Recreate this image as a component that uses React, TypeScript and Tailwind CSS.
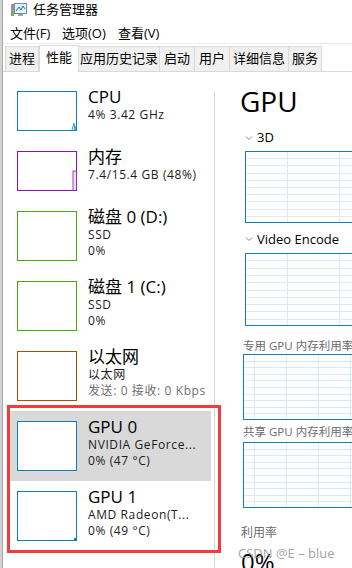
import React from 'react';

const font = "font-['Open_Sans','Noto_Sans_CJK_SC',sans-serif]";

type Item = {
  title: string;
  lines: string[];
  color: string;
  tall: boolean;
  kind?: 'cpu' | 'mem' | 'gpu1';
  selected?: boolean;
  dimLast?: boolean;
};

const items: Item[] = [
  { title: 'CPU', lines: ['4% 3.42 GHz'], color: '#117dbb', tall: false, kind: 'cpu' },
  { title: '内存', lines: ['7.4/15.4 GB (48%)'], color: '#8b12ae', tall: false, kind: 'mem' },
  { title: '磁盘 0 (D:)', lines: ['SSD', '0%'], color: '#4da60c', tall: true },
  { title: '磁盘 1 (C:)', lines: ['SSD', '0%'], color: '#4da60c', tall: true },
  { title: '以太网', lines: ['以太网', '发送: 0 接收: 0 Kbps'], color: '#a74f01', tall: true, dimLast: true },
  { title: 'GPU 0', lines: ['NVIDIA GeForce...', '0% (47 °C)'], color: '#117dbb', tall: true, selected: true },
  { title: 'GPU 1', lines: ['AMD Radeon(T...', '0% (49 °C)'], color: '#117dbb', tall: true, kind: 'gpu1' },
];

function Thumb({ item }: { item: Item }) {
  const h = item.tall ? 50 : 40;
  return (
    <svg width={60} height={h} className="shrink-0">
      <rect x={0.5} y={0.5} width={59} height={h - 1} fill="#fff" stroke={item.color} />
      {item.kind === 'cpu' && (
        <polyline points="55,39 57,32 58,39 59,35" fill="#d3e7f5" stroke={item.color} strokeWidth={0.8} />
      )}
      {item.kind === 'mem' && (
        <rect x={56} y={20} width={3.5} height={19.5} fill="#efe1f5" stroke={item.color} strokeWidth={0.8} />
      )}
      {item.kind === 'gpu1' && <rect x={57} y={47} width={2} height={2} fill={item.color} />}
    </svg>
  );
}

function Graph({ h, start, step }: { h: number; start: number; step: number }) {
  const w = 200;
  const rows = [];
  for (let i = 1; i < 10; i++) rows.push(Math.round((h * i) / 10) + 0.5);
  const cols = [];
  for (let x = start; x < w; x += step) cols.push(x + 0.5);
  return (
    <svg width={w} height={h} className="block shrink-0">
      <rect x={0} y={0} width={w} height={h} fill="#fff" />
      {rows.map((y) => (
        <line key={'r' + y} x1={0} x2={w} y1={y} y2={y} stroke="#d9e9f5" />
      ))}
      {cols.map((x) => (
        <line key={'c' + x} x1={x} x2={x} y1={0} y2={h} stroke="#d9e9f5" />
      ))}
      <rect x={0.5} y={0.5} width={w + 10} height={h - 1} fill="none" stroke="#117dbb" />
    </svg>
  );
}

function Chevron() {
  return (
    <svg width={8} height={6} className="shrink-0">
      <polyline points="1,1.5 4,4.5 7,1.5" fill="none" stroke="#8a8a8a" strokeWidth={1} />
    </svg>
  );
}

const tabs = [
  { label: '进程', w: 'w-[34px]' },
  { label: '性能', w: 'w-[40px]' },
  { label: '应用历史记录', w: 'w-[82px]' },
  { label: '启动', w: 'w-[36px]' },
  { label: '用户', w: 'w-[36px]' },
  { label: '详细信息', w: 'w-[60px]' },
  { label: '服务', w: 'w-[34px]' },
];

export default function App() {
  return (
    <div className={`relative w-[352px] h-[568px] overflow-hidden bg-white flex ${font} text-black`}>
      {/* background window peeking on the left */}
      <div className="w-[2px] bg-[#d2d2d2] shrink-0" />
      <div className="w-[1px] bg-[#a8a8a8] shrink-0" />

      <div className="flex-1 flex flex-col min-w-0">
        {/* title bar */}
        <div className="h-[19px] flex items-center pl-[8px] gap-[6px]">
          <svg width={16} height={13} className="shrink-0">
            <rect x={0} y={1} width={3} height={12} fill="#8c9aa6" />
            <rect x={0} y={9} width={3} height={4} fill="#6bb04a" />
            <rect x={3.5} y={0.5} width={12} height={10} fill="#e3f3fb" stroke="#7d8b96" />
            <polyline points="5,8 8,4 10,7 12,3 14,6" fill="none" stroke="#2f6ea8" strokeWidth={1} />
            <rect x={7} y={11} width={5} height={2} fill="#9aa6b0" />
          </svg>
          <span className="text-[13px] leading-[17px]">任务管理器</span>
        </div>

        {/* menu bar */}
        <div className="h-[25px] pt-[5px] flex items-center pl-[7px] text-[13px] whitespace-nowrap border-b border-[#ececec]">
          <span className="w-[52px] shrink-0">文件(F)</span>
          <span className="w-[56px] shrink-0">选项(O)</span>
          <span className="shrink-0">查看(V)</span>
        </div>

        {/* tabs */}
        <div className="h-[28px] flex items-end pl-[2px] border-b border-[#d9d9d9]">
          {tabs.map((t, i) =>
            i === 1 ? (
              <div
                key={t.label}
                className={`${t.w} h-[27px] -mb-px bg-white border border-b-0 border-[#d9d9d9] flex items-center justify-center text-[13px] pb-[2px]`}
              >
                {t.label}
              </div>
            ) : (
              <div
                key={t.label}
                className={`${t.w} h-[25px] bg-[#f0f0f0] border border-b-0 border-[#d9d9d9] -ml-px first:ml-0 flex items-center justify-center text-[13px]`}
              >
                {t.label}
              </div>
            )
          )}
        </div>

        {/* content */}
        <div className="flex-1 flex min-h-0">
          {/* sidebar */}
          <div className="w-[211px] shrink-0 pt-[9px] flex flex-col">
            {items.map((it) => (
              <div
                key={it.title}
                className={`ml-[6px] w-[202px] flex gap-[11px] pl-[8px] py-[10px] ${it.selected ? 'bg-[#d9d9d9]' : ''}`}
              >
                <Thumb item={it} />
                <div className="-mt-[4px] flex flex-col min-w-0">
                  <div className="text-[17px] leading-[20px] whitespace-nowrap">{it.title}</div>
                  {it.lines.map((l, j) => (
                    <div
                      key={j}
                      className={`text-[12px] tracking-[0.6px] leading-[16px] whitespace-nowrap ${
                        it.dimLast && j === it.lines.length - 1 ? 'text-[#707070]' : 'text-[#1b1b1b]'
                      }`}
                    >
                      {l}
                    </div>
                  ))}
                </div>
              </div>
            ))}
          </div>
          <div className="w-[1px] mt-[19px] bg-[#d4d4d4] shrink-0" />

          {/* detail panel */}
          <div className="flex-1 min-w-0 overflow-hidden flex flex-col">
            <div className="ml-[25px] mt-[12px] text-[28px] leading-[34px]">GPU</div>

            <div className="ml-[30px] mt-[10px] h-[20px] flex items-center gap-[4px] text-[13px]">
              <Chevron />
              <span>3D</span>
            </div>
            <div className="ml-[30px] mt-[3px]">
              <Graph h={72} start={42} step={52} />
            </div>

            <div className="ml-[30px] mt-[7px] h-[20px] flex items-center gap-[4px] text-[13px] whitespace-nowrap">
              <Chevron />
              <span>Video Encode</span>
            </div>
            <div className="ml-[30px] mt-[4px]">
              <Graph h={73} start={42} step={52} />
            </div>

            <div className="ml-[28px] mt-[11px] h-[20px] flex items-center text-[11.5px] text-[#6b6b6b] whitespace-nowrap">
              专用 GPU 内存利用率
            </div>
            <div className="ml-[28px]">
              <Graph h={66} start={11} step={32} />
            </div>

            <div className="ml-[28px] mt-[3px] h-[20px] flex items-center text-[11.5px] text-[#6b6b6b] whitespace-nowrap">
              共享 GPU 内存利用率
            </div>
            <div className="ml-[28px] mt-[1px]">
              <Graph h={66} start={11} step={32} />
            </div>

            <div className="ml-[26px] mt-[16px] h-[20px] flex items-center text-[12px] text-[#6b6b6b]">利用率</div>
            <div className="ml-[26px] mt-[6px] text-[24px] leading-[28px]">0%</div>
          </div>
        </div>
      </div>

      {/* annotation overlay */}
      <div className="absolute left-[7px] top-[405px] w-[214px] h-[148px] border-[3px] border-[#f23b3b] pointer-events-none" />
      <div className="absolute left-[238px] top-[544px] text-[13px] leading-[18px] text-[#8a8a8a]/80 whitespace-nowrap">
        CSDN @E – blue
      </div>
    </div>
  );
}
